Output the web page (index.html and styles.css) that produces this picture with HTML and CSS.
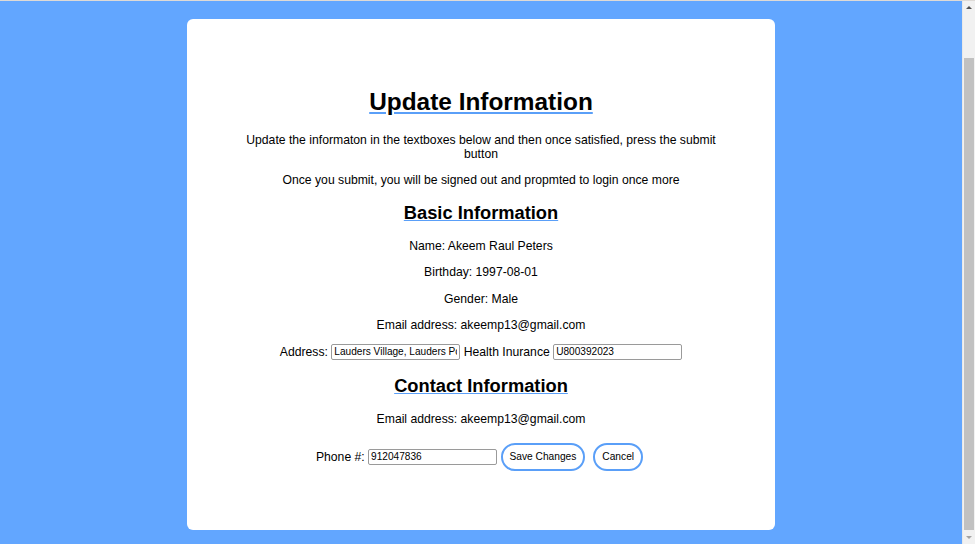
FILE: index.html
```html
<!DOCTYPE html>
<html lang="en">
<head>
  <meta charset="UTF-8">
  <meta name="viewport" content="width=device-width, initial-scale=1.0">
  <link rel="stylesheet" href="styles.css">
  <title>Update Information</title>
</head>
<body>
  <div class="window">
    <div class="topline"></div>
    <div class="view">
      <main class="page">
        <div class="card">
          <h1>Update Information</h1>
          <p>Update the informaton in the textboxes below and then once satisfied, press the submit button</p>
          <p>Once you submit, you will be signed out and propmted to login once more</p>

          <!-- Basic info -->
          <h2>Basic Information</h2>
          <p>Name: Akeem Raul Peters</p>
          <p>Birthday: 1997-08-01</p>
          <p>Gender: Male</p>
          <p>Email address: akeemp13@gmail.com</p>
          <p class="field-row">Address: <input type="text" value="Lauders Village, Lauders Point"> Health Inurance <input type="text" value="U800392023"></p>

          <!-- Contact info -->
          <h2>Contact Information</h2>
          <p>Email address: akeemp13@gmail.com</p>
          <p class="field-row phone-row">Phone #: <input type="text" value="912047836"> <button class="btn">Save Changes</button><button class="btn btn-cancel">Cancel</button></p>
        </div>
      </main>

      <div class="scrollbar">
        <div class="arrow-box"><span class="arrow-up"></span></div>
        <div class="thumb"></div>
        <div class="arrow-box"><span class="arrow-down"></span></div>
      </div>
    </div>
  </div>
</body>
</html>
```

FILE: styles.css
```css
body {
  font-family: "Liberation Sans", Arial, sans-serif;
  font-size: 12.2px;
  margin: 0;
  padding: 0;
  overflow: hidden;
}

.window {
  width: 975px;
  height: 544px;
  display: flex;
  flex-direction: column;
}

.topline {
  height: 1px;
  background-color: #dedad6;
}

.view {
  flex: 1;
  display: flex;
  flex-direction: row;
}

.page {
  flex: 1;
  background-color: #62a6ff;
  padding-top: 18px;
}

.card {
  width: 588px;
  height: 511px;
  margin: 0 auto;
  padding: 53px 50px 0 50px;
  box-sizing: border-box;
  background-color: #fff;
  border-radius: 6px;
  text-align: center;
  color: #000;
}

.card h1 {
  font-size: 24.4px;
  margin: 16.3px 0;
  text-decoration: underline;
  text-decoration-color: #5a9ff8;
}

.card h2 {
  font-size: 18.3px;
  margin: 15.2px 0;
  text-decoration: underline;
  text-decoration-color: #5a9ff8;
}

.card p {
  margin: 12.2px 0;
}

.field-row input {
  font-family: "Liberation Sans", Arial, sans-serif;
  font-size: 10.1px;
  width: 129px;
  height: 16px;
  box-sizing: border-box;
  padding: 1px 2px;
  border: 1px solid #9a9a9a;
  border-radius: 2px;
  color: #000;
}

.phone-row {
  padding-top: 0.5px;
}

.btn {
  font-family: "Liberation Sans", Arial, sans-serif;
  font-size: 10.2px;
  background-color: #fff;
  color: #000;
  border: 2px solid #5a9ff8;
  border-radius: 14px;
  padding: 6.5px 7px;
  margin: 4px 0;
  cursor: pointer;
}

.btn-cancel {
  margin-left: 8px;
  margin-right: 3px;
}

/* fake browser scrollbar */
.scrollbar {
  width: 13px;
  background-color: #f1f1f1;
  border-left: 1px solid #e8e8e8;
  display: flex;
  flex-direction: column;
  box-sizing: border-box;
}

.arrow-box {
  height: 13px;
  display: flex;
  align-items: center;
  justify-content: center;
}

.arrow-up {
  width: 0;
  height: 0;
  border-left: 3px solid transparent;
  border-right: 3px solid transparent;
  border-bottom: 3px solid #505050;
}

.arrow-down {
  width: 0;
  height: 0;
  border-left: 3px solid transparent;
  border-right: 3px solid transparent;
  border-top: 3px solid #a3a3a3;
}

.thumb {
  flex: 1;
  margin: 44px 1px 1px 1px;
  background-color: #c1c1c1;
}
```
